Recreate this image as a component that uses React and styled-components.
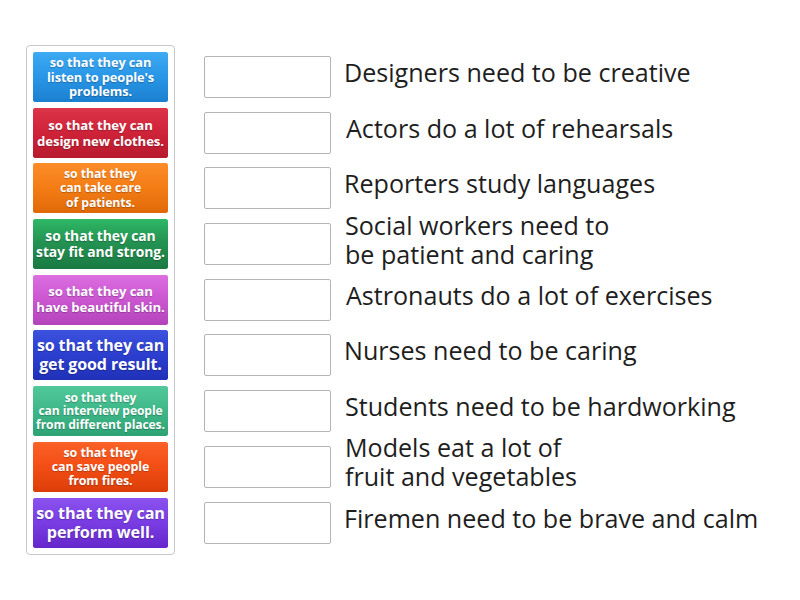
import React from "react";
import styled, { createGlobalStyle } from "styled-components";

const GlobalStyle = createGlobalStyle`
  html, body {
    margin: 0;
    padding: 0;
    background: #fff;
  }
  body {
    font-family: "Open Sans", "Noto Sans", sans-serif;
  }
`;

const Page = styled.div`
  width: 800px;
  height: 600px;
  display: flex;
  align-items: flex-start;
  padding: 45px 0 0 26px;
  box-sizing: border-box;
`;

const Panel = styled.div`
  width: 149px;
  box-sizing: border-box;
  border: 1px solid #c8c8c8;
  border-radius: 4px;
  padding: 6px;
  display: flex;
  flex-direction: column;
  gap: 5.7px;
`;

const Tile = styled.div`
  height: 50px;
  border-radius: 3px;
  display: flex;
  align-items: center;
  justify-content: center;
  text-align: center;
  color: #fff;
  font-weight: 700;
  font-size: ${(p) => p.size}px;
  line-height: ${(p) => p.lh}px;
  letter-spacing: -0.1px;
  background: linear-gradient(
    to bottom,
    ${(p) => p.light} 0%,
    ${(p) => p.base} 45%,
    ${(p) => p.dark} 100%
  );
  box-shadow: inset 0 2px 0 ${(p) => p.light}, inset 0 -3px 0 ${(p) => p.dark};
  text-shadow: 0 1px 1px rgba(0, 0, 0, 0.25);
  white-space: pre-line;
`;

const Answers = styled.div`
  margin-left: 29px;
  padding-top: 11px;
  display: flex;
  flex-direction: column;
  gap: 13.7px;
`;

const Row = styled.div`
  height: 42px;
  display: flex;
  align-items: center;
`;

const Slot = styled.div`
  width: 127px;
  height: 42px;
  box-sizing: border-box;
  border: 1px solid #b4b4b4;
  border-radius: 2px;
  background: #fff;
  flex-shrink: 0;
`;

const Label = styled.div`
  margin-left: ${(p) => 13 + (p.shift || 0)}px;
  margin-bottom: 9px;
  font-size: 25.1px;
  line-height: 29px;
  color: #1e1e1e;
  white-space: pre-line;
`;

const tiles = [
  { text: "so that they can\nlisten to people's\nproblems.", size: 12.8, lh: 14.5, light: "#3eaaf2", base: "#2a98e8", dark: "#1c80d0" },
  { text: "so that they can\ndesign new clothes.", size: 13.2, lh: 16, light: "#dc3448", base: "#d0243a", dark: "#b81a2e" },
  { text: "so that they\ncan take care\nof patients.", size: 12.3, lh: 14.5, light: "#fb8c2a", base: "#f57e16", dark: "#e06a08" },
  { text: "so that they can\nstay fit and strong.", size: 13.9, lh: 16, light: "#2eb866", base: "#249352", dark: "#1a7a42" },
  { text: "so that they can\nhave beautiful skin.", size: 13.2, lh: 15.5, light: "#dc6ee0", base: "#cc58d2", dark: "#b444bc" },
  { text: "so that they can\nget good result.", size: 16, lh: 19, light: "#3c52de", base: "#2d40d0", dark: "#2030b8" },
  { text: "so that they\ncan interview people\nfrom different places.", size: 12.1, lh: 13.5, light: "#52c89a", base: "#40b98a", dark: "#2ea476" },
  { text: "so that they\ncan save people\nfrom fires.", size: 12.5, lh: 14, light: "#fa6228", base: "#f44f16", dark: "#dc3e08" },
  { text: "so that they can\nperform well.", size: 16.2, lh: 19, light: "#8a52ee", base: "#7a3ee4", dark: "#6628cc" },
];

const labels = [
  { text: "Designers need to be creative", shift: 0 },
  { text: "Actors do a lot of rehearsals", shift: 2 },
  { text: "Reporters study languages", shift: 0 },
  { text: "Social workers need to\nbe patient and caring", shift: 1 },
  { text: "Astronauts do a lot of exercises", shift: 2 },
  { text: "Nurses need to be caring", shift: 0 },
  { text: "Students need to be hardworking", shift: 1 },
  { text: "Models eat a lot of\nfruit and vegetables", shift: 1 },
  { text: "Firemen need to be brave and calm", shift: 0 },
];

export default function App() {
  return (
    <>
      <GlobalStyle />
      <Page>
        <Panel>
          {tiles.map((t, i) => (
            <Tile key={i} {...t}>
              {t.text}
            </Tile>
          ))}
        </Panel>
        <Answers>
          {labels.map((l, i) => (
            <Row key={i}>
              <Slot />
              <Label shift={l.shift}>{l.text}</Label>
            </Row>
          ))}
        </Answers>
      </Page>
    </>
  );
}
